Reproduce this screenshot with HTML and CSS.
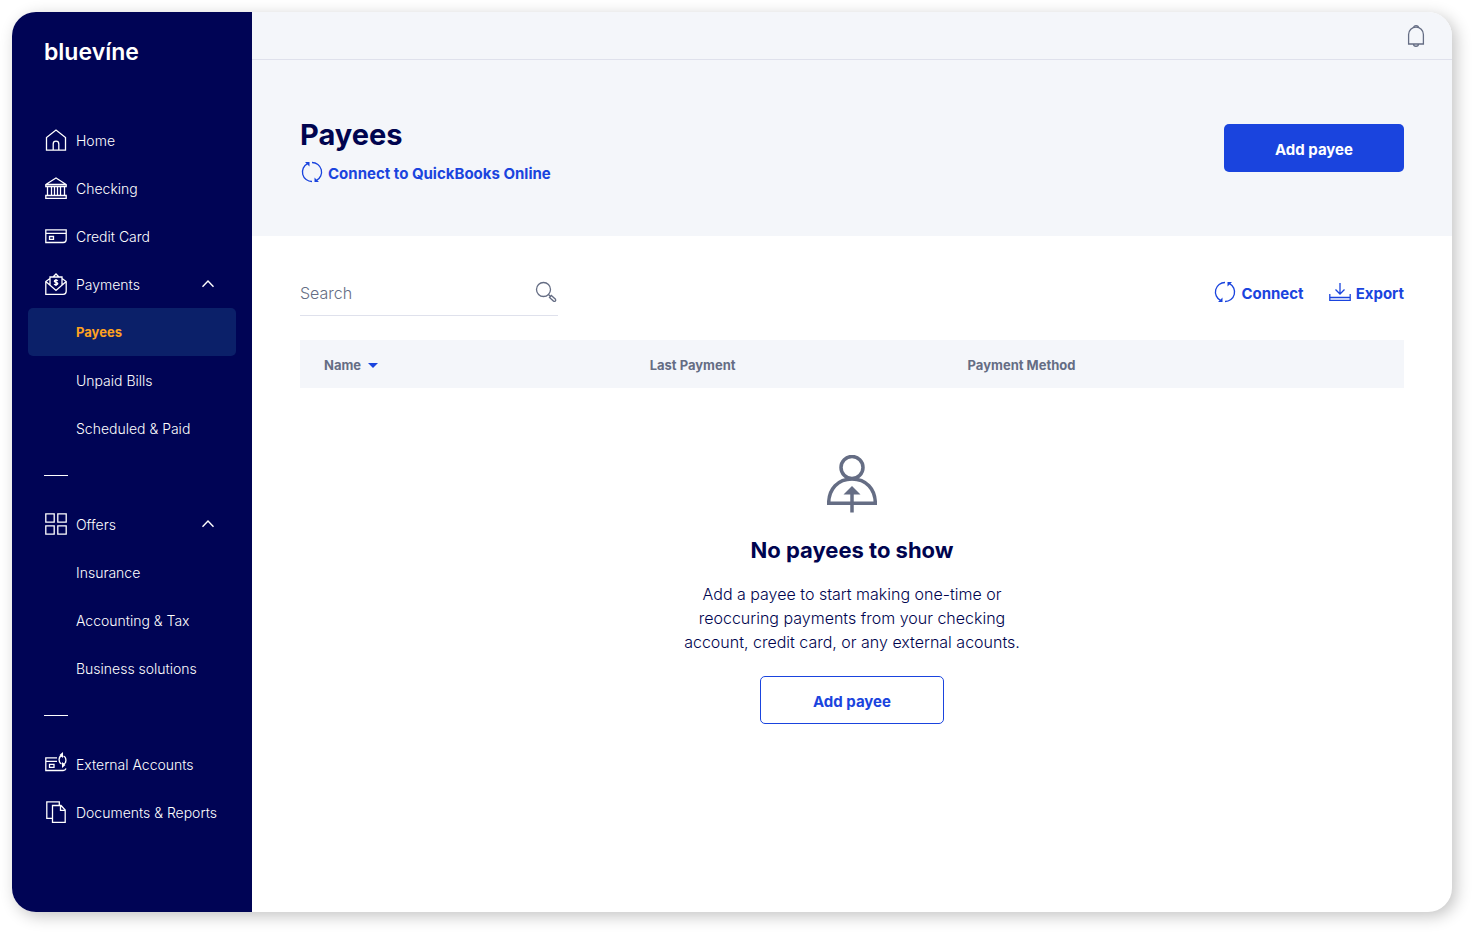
FILE: index.html
```html
<!DOCTYPE html>
<html lang="en">
<head>
  <meta charset="UTF-8">
  <meta name="viewport" content="width=device-width, initial-scale=1.0">
  <title>Payees</title>
  <link rel="stylesheet" href="styles.css">
</head>
<body>

  <div class="app">
    <aside class="sidebar">
      <a href="#" class="logo">bluevíne</a>

      <nav class="nav">
        <a href="#" class="nav-item">
          <svg class="icon" viewBox="0 0 24 24"><path d="M2.5 22.2V9.5L12 2l9.5 7.5v12.7zM9.2 22V16a2.8 2.8 0 0 1 5.6 0v6"/></svg>
          Home
        </a>
        <a href="#" class="nav-item">
          <svg class="icon" viewBox="0 0 24 24"><path d="M1.8 8.5 12 2l10.2 6.5v2H1.8zM1.8 8.5h20.4M1.8 19.5h20.4v2.8H1.8zM3.5 10.5v9M7.5 10.5v9M10.5 10.5v9M13.5 10.5v9M16.5 10.5v9M20.5 10.5v9"/></svg>
          Checking
        </a>
        <a href="#" class="nav-item">
          <svg class="icon" viewBox="0 0 24 24"><path d="M1.8 5.8h20.4v9.7a3 3 0 0 1-3 3H1.8zM1.8 9.3h20.4M5.5 12.5h4v2.8h-4z"/></svg>
          Credit Card
        </a>
        <button type="button" class="nav-item" aria-expanded="true">
          <svg class="icon" viewBox="0 0 24 24"><path d="M6 6.5 1.8 9.5v12.8h17.4a3 3 0 0 0 3-3V9.500L18 6.500M1.800 9.500 12 18.500l10.200-9M6 13V5h12v8M9 5l3-3 3 3M13.800 8.700c-.7-.8-3.500-.9-3.500.6s3.500.9 3.500 2.300-2.800 1.500-3.700.5M12 7v7"/></svg>
          Payments
          <svg class="chevron" viewBox="0 0 12 8"><path d="M.5 6.700 6 1l5.500 5.700"/></svg>
        </button>
        <a href="#" class="nav-item nav-sub active" aria-current="page">Payees</a>
        <a href="#" class="nav-item nav-sub">Unpaid Bills</a>
        <a href="#" class="nav-item nav-sub">Scheduled &amp; Paid</a>

        <hr class="divider">

        <button type="button" class="nav-item" aria-expanded="true">
          <svg class="icon" viewBox="0 0 24 24"><path d="M1.8 1.8h8.4v8.4H1.8zM13.800 1.800h8.400v8.400h-8.400zM1.800 13.800h8.400v8.400H1.800zM13.800 13.800h8.400v8.400h-8.400z"/></svg>
          Offers
          <svg class="chevron" viewBox="0 0 12 8"><path d="M.5 6.700 6 1l5.500 5.700"/></svg>
        </button>
        <a href="#" class="nav-item nav-sub">Insurance</a>
        <a href="#" class="nav-item nav-sub">Accounting &amp; Tax</a>
        <a href="#" class="nav-item nav-sub">Business solutions</a>

        <hr class="divider">

        <a href="#" class="nav-item">
          <svg class="icon" viewBox="0 0 24 24"><path d="M13 5.800H1.800v12.700h17.400a3 3 0 0 0 2.800-2M1.800 9.300H13M5.500 12.300h4.500v3h-4.500zM17.500 12c-3.300-1.500-3.300-7.500.5-8.500M19.500 4c3.300 1.500 3.300 7.500-.5 8.500"/><path class="fill" d="m15.500 3 3.500-3v6zM21.500 13 18 16v-6z"/></svg>
          External Accounts
        </a>
        <a href="#" class="nav-item">
          <svg class="icon" viewBox="0 0 24 24"><path d="M8.500 18.300H2.800V1.800h12.500v3.700M8.500 5.500H17l4.200 4.500v12.300H8.500zM16.500 5.500v4.800h4.700"/></svg>
          Documents &amp; Reports
        </a>
      </nav>
    </aside>

    <main class="main">
      <div class="topbar">
        <button type="button" class="bell" aria-label="Notifications">
          <svg class="icon" viewBox="0 0 24 24"><path d="M4.600 20v-9.500a7.400 7.400 0 0 1 14.800 0V20zM9.500 3.700c0-2.700 5-2.700 5 0M9.500 20c0 3 5 3 5 0"/></svg>
        </button>
      </div>

      <header class="page-header">
        <div>
          <h1>Payees</h1>
          <a href="#" class="action">
            <svg class="icon" viewBox="0 0 24 24"><path d="M12 21.500A9.500 9.500 0 0 1 7.500 3.600M12 2.500a9.500 9.500 0 0 1 4.500 17.900"/><path class="fill" d="M5 2h4.500v4.500zM19 22h-4.500v-4.500z"/></svg>
            <span>Connect to QuickBooks Online</span>
          </a>
        </div>
        <button type="button" class="btn btn-primary">Add payee</button>
      </header>

      <section class="content">
        <div class="toolbar">
          <div class="search">
            <input type="search" id="search" placeholder="Search" aria-label="Search">
            <svg class="icon" viewBox="0 0 24 24"><circle cx="9.500" cy="9.500" r="7"/><path d="m14.500 14.500 1.500 1.500M15.500 17.500l1.800-2 4.200 3.800c.8 1.200-.5 2.500-2 1.800z"/></svg>
          </div>
          <div class="actions">
            <button type="button" class="action">
              <svg class="icon" viewBox="0 0 24 24"><path d="M12 21.500a9.500 9.500 0 0 0 4.500-17.900M12 2.500a9.500 9.500 0 0 0-4.500 17.900"/><path class="fill" d="M19 2h-4.500v4.500zM5 22h4.500v-4.500z"/></svg>
              <span>Connect</span>
            </button>
            <button type="button" class="action">
              <svg class="icon" viewBox="0 0 24 24"><path d="M12 3v11M7.500 9.500 12 14l4.500-4.500M1.800 14v6.400h20.400V14M1.800 17.500h20.400"/></svg>
              <span>Export</span>
            </button>
          </div>
        </div>

        <table class="payees">
          <thead>
            <tr>
              <th class="col-name" aria-sort="descending">Name <svg class="sort" viewBox="0 0 10 5"><path d="M0 0h10L5 5z"/></svg></th>
              <th class="col-last">Last Payment</th>
              <th>Payment Method</th>
            </tr>
          </thead>
        </table>

        <div class="empty">
          <svg class="empty-icon" viewBox="0 0 50 58"><circle cx="25" cy="12.500" r="11"/><path d="M1.700 48.300C1.700 34 11 24 25 24s23.300 10 23.300 24.300zM25 35v22.500"/><path class="fill" d="m25 31 8.500 8.500h-17z"/></svg>
          <h2>No payees to show</h2>
          <p>Add a payee to start making one-time or reoccuring payments from your checking account, credit card, or any external acounts.</p>
          <button type="button" class="btn btn-outline">Add payee</button>
        </div>
      </section>
    </main>
  </div>

</body>
</html>
```

FILE: styles.css
```css
* {
  box-sizing: border-box;
}

body {
  margin: 0;
  padding: 12px 20px 20px 12px;
  min-height: 100vh;
  display: flex;
  background: #fff;
  color: #00044f;
  font-family: Inter, "Liberation Sans", sans-serif;
  font-size: 16px;
}

a {
  color: inherit;
  text-decoration: none;
}

button {
  font: inherit;
  color: inherit;
  background: none;
  border: none;
  padding: 0;
  cursor: pointer;
}

svg {
  flex-shrink: 0;
  fill: none;
  stroke: currentColor;
}

svg .fill {
  fill: currentColor;
  stroke: none;
}

.icon {
  width: 24px;
  height: 24px;
  stroke-width: 1.3;
}

.app {
  flex: 1;
  display: flex;
  border-radius: 24px;
  overflow: hidden;
  background: #fff;
  box-shadow: 4px 4px 16px rgba(0, 0, 0, 0.24);
}

/* sidebar */
.sidebar {
  width: 240px;
  flex-shrink: 0;
  padding: 24px 16px;
  background: #000455;
  color: #fff;
}

.logo {
  display: block;
  padding-left: 16px;
  font-size: 23px;
  font-weight: 600;
  line-height: 32px;
}

.nav {
  display: flex;
  flex-direction: column;
  margin-top: 48px;
}

.nav-item {
  display: flex;
  align-items: center;
  gap: 8px;
  height: 48px;
  padding: 0 22px 0 16px;
  border-radius: 5px;
  font-size: 14px;
  font-weight: 300;
  white-space: nowrap;
}

.nav-sub {
  padding-left: 48px;
}

.nav-item.active {
  background: #0b2069;
  color: #ffa21f;
  font-size: 13px;
  font-weight: 700;
}

.chevron {
  width: 12px;
  height: 8px;
  margin-left: auto;
  stroke-width: 1.4;
}

.divider {
  width: 24px;
  margin: 23px 16px 24px;
  border: none;
  border-top: 1px solid #fff;
}

/* main */
.main {
  flex: 1;
  min-width: 0;
}

.topbar {
  display: flex;
  justify-content: flex-end;
  align-items: center;
  height: 48px;
  padding: 0 24px;
  background: #f4f6fa;
  border-bottom: 1px solid #dfe1ec;
}

.bell {
  height: 24px;
  color: #656d84;
}

.page-header {
  display: flex;
  justify-content: space-between;
  align-items: flex-start;
  padding: 55px 48px 52px;
  background: #f4f6fa;
}

h1 {
  margin: 0 0 5px;
  font-size: 29px;
  font-weight: 700;
  line-height: 40px;
}

.action {
  display: flex;
  align-items: center;
  gap: 4px;
  height: 24px;
  color: #1a44de;
  font-size: 15px;
  font-weight: 700;
  line-height: 24px;
}

.action span {
  padding-top: 3px;
}

.btn {
  height: 48px;
  padding-top: 2px;
  border-radius: 5px;
  font-size: 15px;
  font-weight: 700;
}

.btn-primary {
  width: 180px;
  margin-top: 9px;
  background: #1a44de;
  color: #fff;
}

.btn-outline {
  width: 184px;
  border: 1px solid #1a44de;
  color: #1a44de;
}

.content {
  padding: 32px 48px;
}

.toolbar {
  display: flex;
  justify-content: space-between;
  height: 48px;
  margin-bottom: 24px;
}

.search {
  display: flex;
  align-items: center;
  width: 258px;
  border-bottom: 1px solid #dfe1ec;
  color: #656d84;
}

.search input {
  flex: 1;
  min-width: 0;
  padding: 2px 0 0;
  border: none;
  outline: none;
  background: none;
  color: inherit;
  font: inherit;
  font-weight: 300;
}

.search input::placeholder {
  color: inherit;
}

.actions {
  display: flex;
  align-items: center;
  gap: 24px;
}

.payees {
  width: 100%;
  border-collapse: collapse;
  table-layout: fixed;
}

.payees th {
  height: 48px;
  padding: 2px 0 0 24px;
  background: #f4f6fa;
  color: #656d84;
  font-size: 13px;
  font-weight: 700;
  text-align: left;
}

.payees .col-name {
  width: 29.5%;
}

.payees .col-last {
  width: 28.8%;
}

.sort {
  width: 10px;
  height: 5px;
  margin: 0 0 2px 4px;
  vertical-align: middle;
  fill: #1a44de;
  stroke: none;
}

.empty {
  display: flex;
  flex-direction: column;
  align-items: center;
  padding-top: 67px;
  text-align: center;
}

.empty-icon {
  width: 50px;
  height: 58px;
  stroke-width: 3.5;
  color: #656d84;
}

h2 {
  margin: 21px 0 16px;
  font-size: 22px;
  font-weight: 700;
  line-height: 32px;
}

.empty p {
  max-width: 344px;
  margin: 0 0 22px;
  font-size: 16px;
  font-weight: 300;
  line-height: 24px;
}
```
